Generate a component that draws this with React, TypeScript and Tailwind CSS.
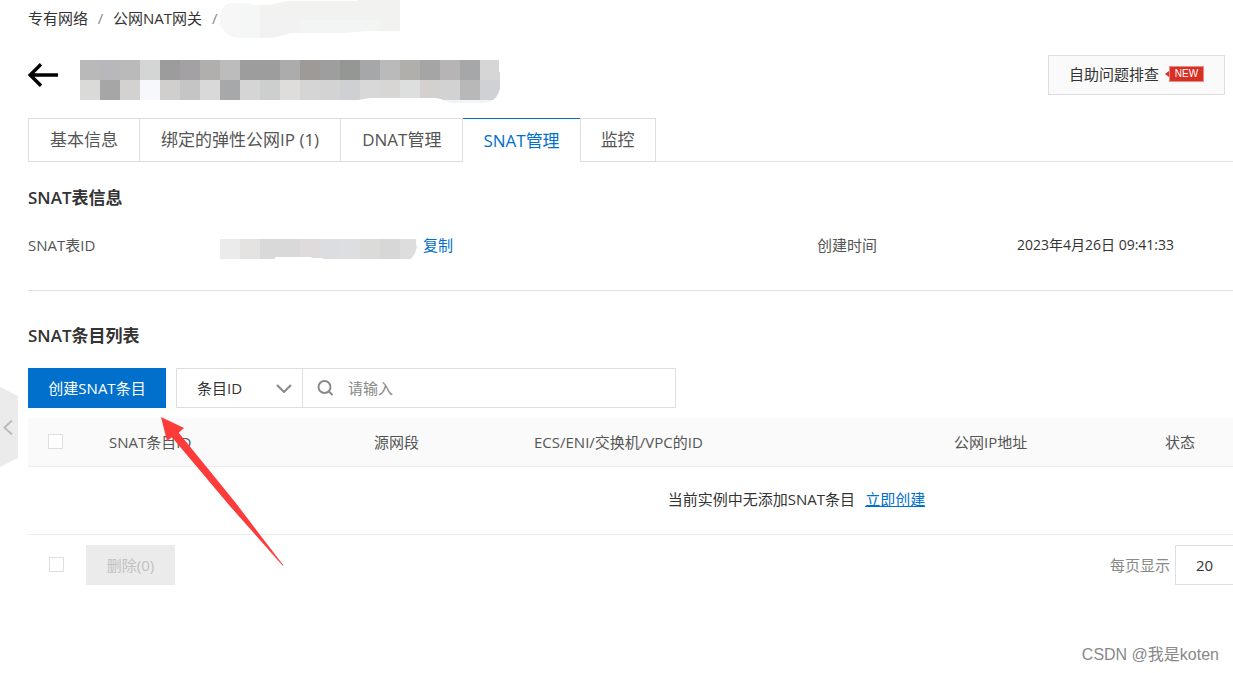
import React from "react";

const topRow = [
  "#b9b9b9", "#b8b8bc", "#bababa", "#d4d6d5", "#9c9c9c", "#a4a1a5", "#b1afad",
  "#bcbcbc", "#9d9d9d", "#9d9d9d", "#acacac", "#9d9a97", "#9e9e9e", "#959795",
  "#a5a7a9", "#bababa", "#b1afac", "#a5a5a5", "#b7b4b5", "#a5a7a9", "#d6d6d6",
];

const bottomRow = [
  "#dadad8", "#a6a6a6", "#d4d2d0", "#f6f8fb", "#d1cfcd", "#c5c5c5", "#d9d9d9",
  "#a7a8aa", "#d5d5d5", "#cdcfce", "#dfdddb", "#d5d5d5", "#d4d3d4", "#cfd0d3",
  "#d8d8d8", "#d8d6d4", "#dddfde", "#d3d0ce", "#d2d2d2", "#b8b8b8", "#d0d1d4",
];

const idCells = [
  "#ebebeb", "#e4e3e1", "#d9d9d9", "#dad9da", "#dfdbdd", "#dcdde0", "#dddedf",
  "#dbdcda", "#d7d7d7", "#dddddd", "#e8e8e8",
];

function MaskedName() {
  return (
    <svg className="shrink-0 self-start" width="180" height="38" viewBox="0 0 180 38" aria-hidden="true">
      <clipPath id="nameClip">
        <path d="M12 3H26L34 5H50C58 4 60 1 72 1H138V0H180V31H144L120 33H72C62 34 62 37 48 38H20C8 37 0 30 0 19C0 10 4 4 12 3Z" />
      </clipPath>
      <g clipPath="url(#nameClip)">
        <rect width="180" height="38" fill="#f2f2f1" />
        <rect width="20" height="38" fill="#f7f7f7" />
        <rect x="20" width="20" height="38" fill="#f5f6f6" />
        <rect x="40" y="20" width="40" height="18" fill="#f2f2f2" />
        <rect x="80" y="20" width="80" height="18" fill="#f3f4f4" />
      </g>
    </svg>
  );
}

function MaskedTitle() {
  return (
    <svg width="420" height="43" viewBox="0 0 420 43" aria-hidden="true">
      <clipPath id="titleClip">
        <path d="M0 0H419V12H420V28C418 38 412 43 402 43H374C362 42 364 38 354 38H290L278 40H0Z" />
      </clipPath>
      <g clipPath="url(#titleClip)">
        {topRow.map((c, i) => (
          <rect key={i} x={i * 20} y="0" width="20" height="20" fill={c} />
        ))}
        {bottomRow.map((c, i) => (
          <rect key={i} x={i * 20} y="20" width="20" height="20" fill={c} />
        ))}
        <rect x="354" y="40" width="66" height="3" fill="#f0f5fb" />
      </g>
    </svg>
  );
}

function MaskedId() {
  return (
    <svg width="197" height="20" viewBox="0 0 197 20" aria-hidden="true">
      <clipPath id="idClip">
        <path d="M0 0H196V5L197 8L195 14L191 20H103V19H92L91 18H56L54 20H0Z" />
      </clipPath>
      <g clipPath="url(#idClip)">
        {idCells.map((c, i) => (
          <rect key={i} x={i * 20} y="0" width="20" height="20" fill={c} />
        ))}
      </g>
    </svg>
  );
}

const tabs = ["基本信息", "绑定的弹性公网IP (1)", "DNAT管理", "SNAT管理", "监控"];

function Checkbox({ label }: { label: string }) {
  return (
    <input
      type="checkbox"
      aria-label={label}
      className="block size-[15px] appearance-none border border-[#dedede] bg-white"
    />
  );
}

export default function App() {
  return (
    <div className="relative flex min-h-screen flex-col overflow-hidden bg-white pl-7 font-['Open_Sans','Noto_Sans_CJK_SC',sans-serif] text-[15px] leading-6 text-[#333]">
      <nav aria-label="breadcrumb" className="flex h-9 items-center">
        <a href="#vpc">专有网络</a>
        <span className="w-[25px] text-center text-[#888]">/</span>
        <a href="#nat">公网NAT网关</a>
        <span className="w-[18px] pl-2.5 text-[#888]">/</span>
        <MaskedName />
      </nav>

      <header className="flex items-start justify-between pt-[19px] pr-2">
        <div className="flex items-start gap-[22px] pt-[5px]">
          <button type="button" aria-label="返回" className="pt-[3px]">
            <svg width="30" height="24" viewBox="0 0 30 24" fill="none" stroke="#000" strokeWidth="3.4">
              <path d="M30 12H3M13 1.2L2.2 12L13 22.8" />
            </svg>
          </button>
          <MaskedTitle />
        </div>
        <button
          type="button"
          className="flex h-10 items-center border border-[#dedede] bg-[#fafafa] px-5 pb-0.5"
        >
          自助问题排查
          <span className="ml-1.5 flex items-center">
            <svg width="4" height="6" viewBox="0 0 4 6" aria-hidden="true">
              <path d="M4 0V6L0 3Z" fill="#d93026" />
            </svg>
            <span className="flex h-4 w-[35px] items-center justify-center border border-[#ec8a84] bg-[#d93026] font-['Liberation_Sans',sans-serif] text-[10px] leading-4 text-white">
              NEW
            </span>
          </span>
        </button>
      </header>

      <div role="tablist" className="mt-[15px] flex">
        {tabs.map((t, i) => (
          <button
            key={t}
            type="button"
            role="tab"
            aria-selected={i === 3}
            className={
              i === 3
                ? "h-11 border-t border-t-[#0070cc] px-5 text-[17px] text-[#0070cc]"
                : i === 4
                  ? "h-11 border border-[#dedede] px-5 text-[17px] text-[#555]"
                  : i === 0
                    ? "h-11 border border-[#dedede] px-[21px] text-[17px] text-[#555]"
                    : "h-11 border-y border-r border-[#dedede] px-[21px] text-[17px] text-[#555]"
            }
          >
            {t}
          </button>
        ))}
        <div className="flex-1 border-b border-[#e3e3e3]" />
      </div>

      <section className="border-b border-[#dedede] pb-[33px]">
        <h2 className="mt-6 text-[17px] font-semibold">SNAT表信息</h2>
        <dl className="mt-[23px] flex h-6 items-center">
          <dt className="w-48 text-[#555]">SNAT表ID</dt>
          <dd className="flex flex-1 items-center gap-1.5">
            <span className="pt-2">
              <MaskedId />
            </span>
            <button type="button" className="text-[#0070cc]">复制</button>
          </dd>
          <dt className="w-[200px] text-[#555]">创建时间</dt>
          <dd className="w-[216px] text-[14px]">2023年4月26日 09:41:33</dd>
        </dl>
      </section>

      <section>
        <h2 className="mt-[33px] text-[17px] font-semibold">SNAT条目列表</h2>
        <div className="mt-5 flex h-10 gap-2.5">
          <button type="button" className="w-[138px] bg-[#0070cc] text-white">
            创建SNAT条目
          </button>
          <div className="flex w-[500px] border border-[#dedede]">
            <div className="relative w-[126px] border-r border-[#dedede]">
              <select aria-label="搜索条件" className="h-full w-full appearance-none bg-transparent pl-5">
                <option>条目ID</option>
              </select>
              <svg
                className="pointer-events-none absolute top-[15px] right-2.5"
                width="16"
                height="9"
                viewBox="0 0 16 9"
                fill="none"
                stroke="#888"
                strokeWidth="2"
              >
                <path d="M1 1L8 8L15 1" />
              </svg>
            </div>
            <label className="flex flex-1 items-center gap-[15px] pl-3.5">
              <svg width="16" height="16" viewBox="0 0 16 16" fill="none" stroke="#888" strokeWidth="1.9" aria-hidden="true">
                <circle cx="7.5" cy="7" r="6" />
                <path d="M11.5 11L15.5 15" />
              </svg>
              <input
                type="text"
                aria-label="搜索"
                placeholder="请输入"
                className="min-w-0 flex-1 outline-none placeholder:text-[#888]"
              />
            </label>
          </div>
        </div>

        <table className="mt-2.5 w-full table-fixed text-left">
          <colgroup>
            <col className="w-[61px]" />
            <col className="w-[265px]" />
            <col className="w-[160px]" />
            <col className="w-[420px]" />
            <col className="w-[211px]" />
            <col />
          </colgroup>
          <thead>
            <tr className="h-12 border-b border-[#ebebeb] bg-[#fafafa] text-[#555]">
              <th className="pl-5">
                <Checkbox label="全选" />
              </th>
              <th className="px-5 font-normal">SNAT条目ID</th>
              <th className="px-5 font-normal">源网段</th>
              <th className="px-5 font-normal">ECS/ENI/交换机/VPC的ID</th>
              <th className="px-5 font-normal">公网IP地址</th>
              <th className="px-5 font-normal">状态</th>
            </tr>
          </thead>
          <tbody>
            <tr className="h-[68px] border-b border-[#ebebeb]">
              <td colSpan={6} className="pb-0.5 pl-[332px] text-center">
                当前实例中无添加SNAT条目
                <a href="#create" className="ml-2.5 text-[#0070cc] underline">立即创建</a>
              </td>
            </tr>
          </tbody>
        </table>

        <div className="flex items-center pt-2.5 pl-[21px]">
          <Checkbox label="选择全部条目" />
          <button type="button" disabled className="ml-[22px] h-10 w-[89px] bg-[#ebebeb] text-[#c1c1c1]">
            删除(0)
          </button>
          <label htmlFor="page-size" className="ml-auto text-[#888]">每页显示</label>
          <select
            id="page-size"
            className="ml-[5px] h-10 w-[58px] appearance-none border-y border-l border-[#dedede] bg-white pl-5"
          >
            <option>20</option>
          </select>
        </div>
      </section>

      <footer className="mt-auto pr-3.5 pb-1.5 text-right font-['Liberation_Sans','Noto_Sans_CJK_SC',sans-serif] text-[16px] text-[#888]">
        CSDN @我是koten
      </footer>

      <button type="button" aria-label="展开侧栏" className="absolute top-[387px] left-0">
        <svg width="18" height="80" viewBox="0 0 18 80">
          <path d="M0 0L18 9V71L0 80Z" fill="#ebebeb" />
          <path d="M12 33.5L4.5 40.5L12 47.5" fill="none" stroke="#bbb" strokeWidth="2" />
        </svg>
      </button>

      <svg
        className="pointer-events-none absolute top-[417px] left-[161px]"
        width="123"
        height="149"
        viewBox="0 0 123 149"
        aria-hidden="true"
      >
        <path d="M0 0L23 11L17.7 15.7L74 85L122.5 148.5L121.5 148.5L68 88L11 20.3L6 24Z" fill="#fc3b3a" />
      </svg>
    </div>
  );
}
